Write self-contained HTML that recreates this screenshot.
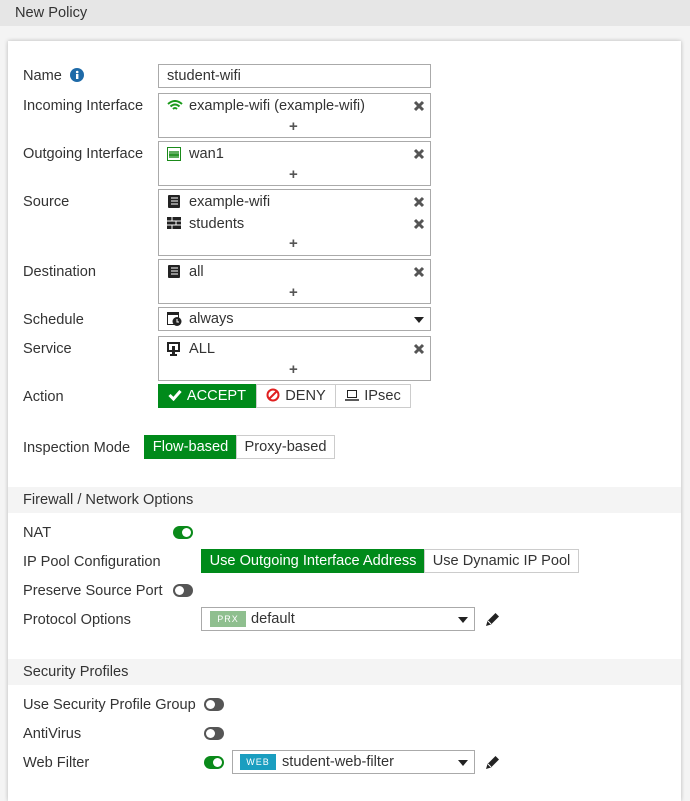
<!DOCTYPE html><html><head><style>
*{box-sizing:border-box;margin:0;padding:0}
body{width:690px;height:789px;overflow:hidden;background:#f4f4f4;font-family:"Liberation Sans",sans-serif;font-size:14.6px;color:#333;position:relative}
.a{position:absolute}
.hdr{left:0;top:0;width:690px;height:26px;background:#e6e6e6;padding:6px 0 0 15px;line-height:15px}
.panel{left:8px;top:41px;width:673px;height:760px;background:#fff;box-shadow:0 0 4px rgba(0,0,0,.25)}
.lbl{left:23px;line-height:18px}
.box{left:158px;width:273px;border:1px solid #aaa;background:#fff}
.row{position:absolute;left:8px;height:18px;line-height:18px}
.row span{position:absolute;left:22px;white-space:nowrap}
.x{position:absolute;right:5px;width:12px;height:12px}
.plus{position:absolute;left:130px;font-size:15px;color:#555;font-weight:bold;line-height:14px}
.sec{left:8px;width:673px;height:26px;background:#f4f4f4;padding:5px 0 0 15px;line-height:17px}
.btn{position:absolute;height:24px;border:1px solid #ccc;line-height:23px;text-align:center;background:#fff}
.g{background:#008a1a;color:#fff;border-color:#008a1a}
.tg{position:absolute;width:20px;height:13px;border-radius:7px;background:#555}
.tg::after{content:"";position:absolute;top:2px;left:2px;width:9px;height:9px;border-radius:50%;background:#fff}
.tg.on{background:#0a8a1a}.tg.on::after{left:9px}
.caret{position:absolute;right:6px;top:9px;border-left:5px solid transparent;border-right:5px solid transparent;border-top:6px solid #222}
.badge{position:absolute;top:3px;height:16px;color:#fff;font-size:9px;letter-spacing:1px;line-height:16px;text-align:center}
.val{position:absolute;left:49px;top:2px;line-height:18px}
</style></head><body>
<div class="a hdr">New Policy</div>
<div class="a panel"></div>
<svg width="0" height="0" style="position:absolute"><defs><symbol id="x" viewBox="0 0 12 12"><path d="M2 2L10 10M10 2L2 10" stroke="#555" stroke-width="3"/></symbol></defs></svg>

<div class="a lbl" style="top:67px">Name <svg style="vertical-align:-2px;margin-left:4px" width="14" height="14"><circle cx="7" cy="7" r="7" fill="#1e6aa8"/><rect x="6" y="6" width="2.4" height="5" fill="#fff"/><circle cx="7.2" cy="4" r="1.3" fill="#fff"/></svg></div>
<div class="a box" style="top:64px;height:24px;padding:2px 0 0 8px;line-height:19px">student-wifi</div>

<div class="a lbl" style="top:97px">Incoming Interface</div>
<div class="a box" style="top:93px;height:45px">
<div class="row" style="top:3px"><svg width="16" height="12" viewBox="0 0 16 12" style="position:absolute;top:3px"><path d="M1 4Q8 -2 15 4M3.5 6.5Q8 2.5 12.5 6.5M6 9Q8 7 10 9" stroke="#1a9a1a" stroke-width="2" fill="none"/></svg><span>example-wifi (example-wifi)</span></div>
<svg class="x" style="top:6px"><use href="#x"/></svg><div class="plus" style="top:26px">+</div></div>

<div class="a lbl" style="top:145px">Outgoing Interface</div>
<div class="a box" style="top:141px;height:45px">
<div class="row" style="top:3px"><svg width="14" height="14" style="position:absolute;top:2px"><rect x="0.5" y="0.5" width="13" height="13" fill="none" stroke="#1a8a1a"/><path d="M3 4v7M5 4v7M7 4v7M9 4v7M11 4v7M2 8h10" stroke="#1a8a1a" stroke-width="1.4"/></svg><span>wan1</span></div>
<svg class="x" style="top:6px"><use href="#x"/></svg><div class="plus" style="top:26px">+</div></div>

<div class="a lbl" style="top:193px">Source</div>
<div class="a box" style="top:189px;height:67px">
<div class="row" style="top:3px"><svg width="14" height="14" style="position:absolute;top:2px"><rect x="1" y="0" width="12" height="13" rx="1" fill="#222"/><path d="M4 3h7M4 6h7M4 9h7" stroke="#fff"/></svg><span>example-wifi</span></div>
<svg class="x" style="top:6px"><use href="#x"/></svg>
<div class="row" style="top:25px"><svg width="14" height="13" style="position:absolute;top:2px"><rect x="0" y="0" width="14" height="12" fill="#222"/><path d="M0 4h14M0 8h14M5 0v4M9 4v4M5 8v4" stroke="#fff"/></svg><span>students</span></div>
<svg class="x" style="top:28px"><use href="#x"/></svg><div class="plus" style="top:47px">+</div></div>

<div class="a lbl" style="top:263px">Destination</div>
<div class="a box" style="top:259px;height:45px">
<div class="row" style="top:3px"><svg width="14" height="14" style="position:absolute;top:2px"><rect x="1" y="0" width="12" height="13" rx="1" fill="#222"/><path d="M4 3h7M4 6h7M4 9h7" stroke="#fff"/></svg><span>all</span></div>
<svg class="x" style="top:6px"><use href="#x"/></svg><div class="plus" style="top:26px">+</div></div>

<div class="a lbl" style="top:311px">Schedule</div>
<div class="a box" style="top:307px;height:24px">
<div class="row" style="top:2px"><svg width="15" height="14" style="position:absolute;top:2px"><rect x="0.5" y="0.5" width="11" height="12" fill="none" stroke="#222"/><rect x="0" y="0" width="12" height="3" fill="#222"/><circle cx="10" cy="9.5" r="4.5" fill="#222"/><path d="M10 7v3h2" stroke="#fff" fill="none"/></svg><span>always</span></div><div class="caret"></div></div>

<div class="a lbl" style="top:340px">Service</div>
<div class="a box" style="top:336px;height:45px">
<div class="row" style="top:3px"><svg width="14" height="14" style="position:absolute;top:2px"><rect x="0" y="0" width="13" height="10" fill="#222"/><rect x="2" y="2" width="9" height="6" fill="#fff"/><rect x="5" y="4" width="3" height="8" fill="#222"/><rect x="3" y="12" width="7" height="2" fill="#222"/></svg><span>ALL</span></div>
<svg class="x" style="top:6px"><use href="#x"/></svg><div class="plus" style="top:26px">+</div></div>

<div class="a lbl" style="top:388px">Action</div>
<div class="btn g" style="left:158px;top:384px;width:98px"><svg width="14" height="12" style="vertical-align:-1px;margin-right:5px"><path d="M1.5 6l4 4 7-8" stroke="#fff" stroke-width="3" fill="none"/></svg>ACCEPT</div>
<div class="btn" style="left:256px;top:384px;width:80px"><svg width="14" height="14" style="vertical-align:-2px;margin-right:5px"><circle cx="7" cy="7" r="5.5" stroke="#e02020" stroke-width="2" fill="none"/><path d="M3 11L11 3" stroke="#e02020" stroke-width="2"/></svg>DENY</div>
<div class="btn" style="left:335px;top:384px;width:76px"><svg width="14" height="12" style="vertical-align:-1px;margin-right:5px"><rect x="2.5" y="1.5" width="9" height="7" fill="none" stroke="#222"/><path d="M0 11h14" stroke="#222" stroke-width="1.5"/></svg>IPsec</div>

<div class="a lbl" style="top:439px">Inspection Mode</div>
<div class="btn g" style="left:144px;top:435px;width:93px">Flow-based</div>
<div class="btn" style="left:236px;top:435px;width:99px">Proxy-based</div>

<div class="a sec" style="top:487px">Firewall / Network Options</div>
<div class="a lbl" style="top:524px">NAT</div><div class="tg on" style="left:173px;top:526px"></div>
<div class="a lbl" style="top:553px">IP Pool Configuration</div>
<div class="btn g" style="left:201px;top:549px;width:224px">Use Outgoing Interface Address</div>
<div class="btn" style="left:424px;top:549px;width:155px">Use Dynamic IP Pool</div>
<div class="a lbl" style="top:582px">Preserve Source Port</div><div class="tg" style="left:173px;top:584px"></div>
<div class="a lbl" style="top:611px">Protocol Options</div>
<div class="a box" style="left:201px;top:607px;height:24px;width:274px"><div class="badge" style="left:8px;width:36px;background:#8fbf8f">PRX</div><span class="val">default</span><div class="caret"></div></div>
<svg class="a" style="left:485px;top:611px" width="16" height="16"><path d="M1 15l1.5-5 8-8 3.5 3.5-8 8z" fill="#222"/><path d="M3 10l3 3" stroke="#fff"/></svg>

<div class="a sec" style="top:659px">Security Profiles</div>
<div class="a lbl" style="top:696px">Use Security Profile Group</div><div class="tg" style="left:204px;top:698px"></div>
<div class="a lbl" style="top:725px">AntiVirus</div><div class="tg" style="left:204px;top:727px"></div>
<div class="a lbl" style="top:754px">Web Filter</div><div class="tg on" style="left:204px;top:756px"></div>
<div class="a box" style="left:232px;top:750px;height:24px;width:243px"><div class="badge" style="left:7px;width:36px;background:#1a9ec0">WEB</div><span class="val">student-web-filter</span><div class="caret"></div></div>
<svg class="a" style="left:485px;top:754px" width="16" height="16"><path d="M1 15l1.5-5 8-8 3.5 3.5-8 8z" fill="#222"/><path d="M3 10l3 3" stroke="#fff"/></svg>
</body></html>
